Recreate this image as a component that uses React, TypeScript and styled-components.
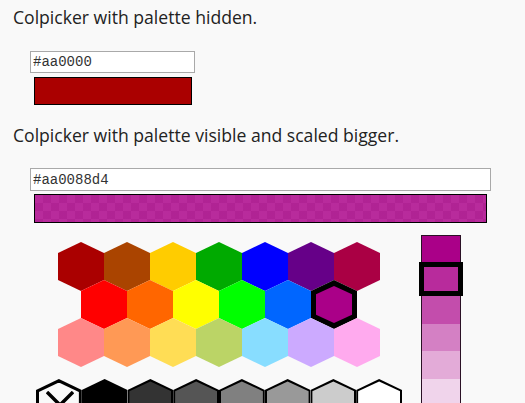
import React from "react";
import styled, { createGlobalStyle } from "styled-components";

const Global = createGlobalStyle`
  html, body { margin: 0; padding: 0; overflow: hidden; background: #f9f9f9; }
  body { font-family: "Open Sans", "Liberation Sans", sans-serif; color: #222; }
`;

const Page = styled.div`
  padding: 0 0 0 13px;
`;

const Heading = styled.div<{ $top: number }>`
  font-size: 17.6px;
  line-height: 23px;
  padding-top: ${(p) => p.$top}px;
  color: #222;
`;

const ColorInput = styled.input<{ $w: number; $h: number; $mt: number }>`
  display: block;
  box-sizing: border-box;
  margin: ${(p) => p.$mt}px 0 0 17px;
  width: ${(p) => p.$w}px;
  height: ${(p) => p.$h}px;
  border: 1px solid #a9a9a9;
  background: #fff;
  padding: 0 2px;
  font-family: "Liberation Mono", "Courier New", monospace;
  font-size: 14px;
  color: #333;
  outline: none;
`;

const Swatch = styled.div<{ $w: number; $h: number; $color: string; $checker?: boolean }>`
  box-sizing: border-box;
  margin: ${(p) => (p.$checker ? 3 : 4)}px 0 0 21px;
  width: ${(p) => p.$w}px;
  height: ${(p) => p.$h}px;
  border: 1px solid #000;
  background-color: #fff;
  background-image: ${(p) =>
    p.$checker
      ? `linear-gradient(${p.$color}, ${p.$color}),
         conic-gradient(#d0d0d0 25%, #fff 0 50%, #d0d0d0 0 75%, #fff 0)`
      : `linear-gradient(${p.$color}, ${p.$color})`};
  background-size: auto, 16px 16px;
`;

const Palette = styled.div`
  display: flex;
  margin-top: 12px;
  margin-left: 22px;
`;

const HexColumn = styled.div`
  display: flex;
  flex-direction: column;
  padding-top: 7px;
  width: 386px;
`;

const HexRow = styled.div<{ $indent: number; $mt: number }>`
  display: flex;
  margin-left: ${(p) => p.$indent}px;
  margin-top: ${(p) => p.$mt}px;
`;

const HEX = "polygon(50% 0, 100% 22.4%, 100% 77.6%, 50% 100%, 0 77.6%, 0 22.4%)";

const Hex = styled.div<{ $color: string }>`
  flex: none;
  width: 46px;
  height: 49px;
  clip-path: ${HEX};
  background: ${(p) => p.$color};
  display: flex;
  align-items: center;
  justify-content: center;
  position: relative;
`;

const HexInner = styled.div<{ $color: string; $inset: number }>`
  width: ${(p) => 46 - p.$inset * 2}px;
  height: ${(p) => 49 - p.$inset * 2.4}px;
  clip-path: ${HEX};
  background: ${(p) => p.$color};
`;

const GrayHex = styled(Hex)`
  width: 45.75px;
`;

const Check = styled.svg`
  position: absolute;
  left: 10px;
  top: 12px;
`;

const ShadeBar = styled.div`
  display: flex;
  flex-direction: column;
  width: 40px;
`;

const Shade = styled.div<{ $color: string; $first?: boolean }>`
  box-sizing: border-box;
  height: ${(p) => (p.$first ? 27 : 27.5)}px;
  background: ${(p) => p.$color};
  border-left: 1px solid #2a1025;
  border-right: 1px solid #2a1025;
  border-top: ${(p) => (p.$first ? "1px solid #2a1025" : "none")};
`;

const ShadeSelected = styled.div<{ $color: string }>`
  box-sizing: border-box;
  height: 34px;
  margin: 0 -2px;
  border: 5px solid #000;
  background: ${(p) => p.$color};
`;

const row1 = ["#aa0000", "#aa4400", "#ffcc00", "#00aa00", "#0000ff", "#660088", "#aa0044"];
const row2 = ["#ff0000", "#ff6600", "#ffff00", "#00ff00", "#0066ff"];
const row3 = ["#ff8888", "#ff9955", "#ffdd55", "#bbd466", "#88ddff", "#ccaaff", "#ffaaee"];
const grays = ["#000000", "#333333", "#555555", "#808080", "#999999", "#cccccc", "#ffffff"];
const shades = ["#c34dac", "#d480c4", "#e3abd8", "#f0d4eb"];

export default function App() {
  return (
    <Page>
      <Global />
      <Heading $top={6}>Colpicker with palette hidden.</Heading>
      <ColorInput $w={165} $h={22} $mt={22} defaultValue="#aa0000" />
      <Swatch $w={158} $h={28} $color="#aa0000" />
      <Heading $top={18.5}>Colpicker with palette visible and scaled bigger.</Heading>
      <ColorInput $w={461} $h={23} $mt={21.5} defaultValue="#aa0088d4" />
      <Swatch $w={453} $h={29} $color="rgba(170,0,136,0.83)" $checker />
      <Palette>
        <HexColumn>
          <HexRow $indent={23} $mt={0}>
            {row1.map((c) => (
              <Hex key={c} $color={c} />
            ))}
          </HexRow>
          <HexRow $indent={46} $mt={-11}>
            {row2.map((c) => (
              <Hex key={c} $color={c} />
            ))}
            <Hex $color="#000">
              <HexInner $color="#aa0088" $inset={5} />
            </Hex>
          </HexRow>
          <HexRow $indent={23} $mt={-11}>
            {row3.map((c) => (
              <Hex key={c} $color={c} />
            ))}
          </HexRow>
          <HexRow $indent={1} $mt={12}>
            <GrayHex $color="#000">
              <HexInner $color="#f9f9f9" $inset={3} />
              <Check width="28" height="17" viewBox="0 0 28 17">
                <polyline points="1,1 14,14 27,1" fill="none" stroke="#000" strokeWidth="3.4" />
              </Check>
            </GrayHex>
            {grays.map((c) => (
              <GrayHex key={c} $color="#000">
                <HexInner $color={c} $inset={2} />
              </GrayHex>
            ))}
          </HexRow>
        </HexColumn>
        <ShadeBar>
          <Shade $first $color="#aa0088" />
          <ShadeSelected $color="#b82b9c" />
          {shades.map((c) => (
            <Shade key={c} $color={c} />
          ))}
        </ShadeBar>
      </Palette>
    </Page>
  );
}
